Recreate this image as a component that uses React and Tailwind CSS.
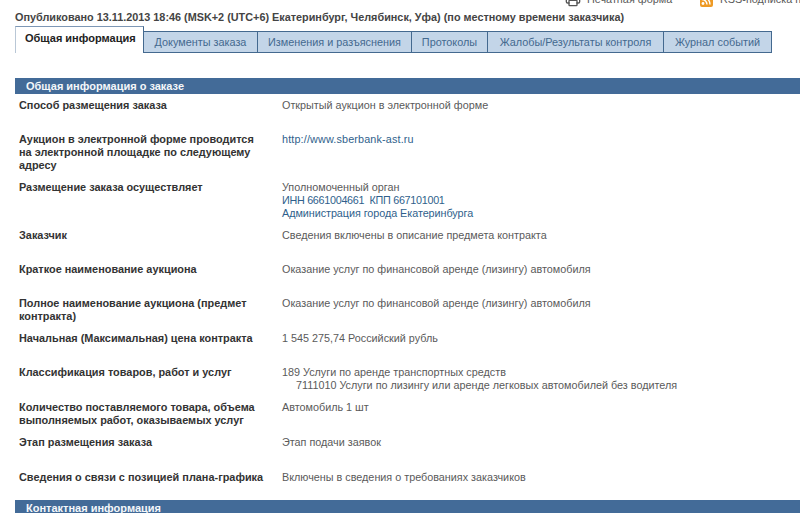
import { Printer } from "lucide-react";

const tabs = [
  { label: "Документы заказа", w: "w-[115px]" },
  { label: "Изменения и разъяснения", w: "w-[155px]" },
  { label: "Протоколы", w: "w-[77px]" },
  { label: "Жалобы/Результаты контроля", w: "w-[177px]" },
  { label: "Журнал событий", w: "w-[109px]" },
];

const rows = [
  { h: "h-[34px]", label: "Способ размещения заказа", value: "Открытый аукцион в электронной форме" },
  {
    h: "h-[48px]",
    label: "Аукцион в электронной форме проводится на электронной площадке по следующему адресу",
    value: <span className="text-[#2f5f8c] tracking-[0.15px]">http://www.sberbank-ast.ru</span>,
  },
  {
    h: "h-[48px]",
    label: "Размещение заказа осуществляет",
    value: (
      <>
        <div>Уполномоченный орган</div>
        <div className="text-[#2f5f8c] tracking-[-0.3px] whitespace-pre">ИНН 6661004661  КПП 667101001</div>
        <div className="text-[#2f5f8c] tracking-[-0.05px]">Администрация города Екатеринбурга</div>
      </>
    ),
  },
  { h: "h-[34px]", label: "Заказчик", value: "Сведения включены в описание предмета контракта" },
  { h: "h-[34px]", label: "Краткое наименование аукциона", value: "Оказание услуг по финансовой аренде (лизингу) автомобиля" },
  { h: "h-[35px]", label: "Полное наименование аукциона (предмет контракта)", value: "Оказание услуг по финансовой аренде (лизингу) автомобиля" },
  { h: "h-[34px]", label: "Начальная (Максимальная) цена контракта", value: "1 545 275,74 Российский рубль" },
  {
    h: "h-[35px]",
    label: "Классификация товаров, работ и услуг",
    value: (
      <>
        <div>189 Услуги по аренде транспортных средств</div>
        <div className="pl-[14px]">7111010 Услуги по лизингу или аренде легковых автомобилей без водителя</div>
      </>
    ),
  },
  { h: "h-[35px]", label: "Количество поставляемого товара, объема выполняемых работ, оказываемых услуг", value: "Автомобиль 1 шт" },
  { h: "h-[35px]", label: "Этап размещения заказа", value: "Этап подачи заявок" },
  { h: "h-[29px]", label: "Сведения о связи с позицией плана-графика", value: "Включены в сведения о требованиях заказчиков" },
];

function SectionBar({ children }) {
  return (
    <div className="bg-[#436b98] text-[#f4f7fa] font-bold text-[11px] leading-[16px] pl-[11px]">
      {children}
    </div>
  );
}

function RssIcon() {
  return (
    <svg width="13" height="16" viewBox="0 0 13 16" className="shrink-0">
      <rect x="0" y="0" width="13" height="16" rx="2" fill="#ee9a25" />
      <circle cx="3" cy="12.5" r="1.4" fill="#fff" />
      <path d="M2 8.5a5 5 0 0 1 5 5M2 5.5a8 8 0 0 1 8 8" stroke="#fff" strokeWidth="1.4" fill="none" />
    </svg>
  );
}

export default function App() {
  return (
    <div className="w-[800px] h-[513px] overflow-hidden bg-white font-['Liberation_Sans',Arial,sans-serif] text-[10.85px] leading-[13px] text-[#5a5a5a]">
      <div className="h-[9px] overflow-hidden flex">
        <div className="ml-[565px] -mt-[10px] flex items-center gap-[6px] w-[135px] h-[18px] shrink-0">
          <Printer size={16} className="text-[#555] shrink-0" />
          <span className="whitespace-nowrap">Печатная форма</span>
        </div>
        <div className="-mt-[10px] flex items-center gap-[7px] h-[18px] whitespace-nowrap shrink-0">
          <RssIcon />
          <span>RSS-подписка по</span>
        </div>
      </div>

      <div className="pl-[15px] pt-[2px] font-bold text-[#444] whitespace-nowrap">
        Опубликовано 13.11.2013 18:46 (MSK+2 (UTC+6) Екатеринбург, Челябинск, Уфа) (по местному времени заказчика)
      </div>

      <div className="flex items-end h-[27px] mt-[2px] ml-[15px]">
        <div className="w-[129px] h-[27px] bg-white border-t border-l border-r border-t-[#7d97b5] border-l-[#b9c7d6] border-r-[#44698f] font-bold text-[#222] pl-[9px] pt-[2px] leading-[18px] text-[11px]">
          Общая информация
        </div>
        {tabs.map((tab) => (
          <div
            key={tab.label}
            className={`${tab.w} h-[22px] -ml-px bg-[#c3d5e8] border border-[#44698f] text-[#44698f] flex items-center justify-center whitespace-nowrap`}
          >
            {tab.label}
          </div>
        ))}
      </div>

      <div className="mt-[25px] ml-[15px]">
        <SectionBar>Общая информация о заказе</SectionBar>
        <div className="pt-[5px]">
          {rows.map((row) => (
            <div key={row.label} className={`${row.h} flex`}>
              <div className="w-[262px] shrink-0 pl-[4px] pr-[10px] font-bold text-[#333] text-[10.9px]">{row.label}</div>
              <div className="flex-1 pl-[5px] text-[10.8px]">{row.value}</div>
            </div>
          ))}
        </div>
        <SectionBar>Контактная информация</SectionBar>
      </div>
    </div>
  );
}
